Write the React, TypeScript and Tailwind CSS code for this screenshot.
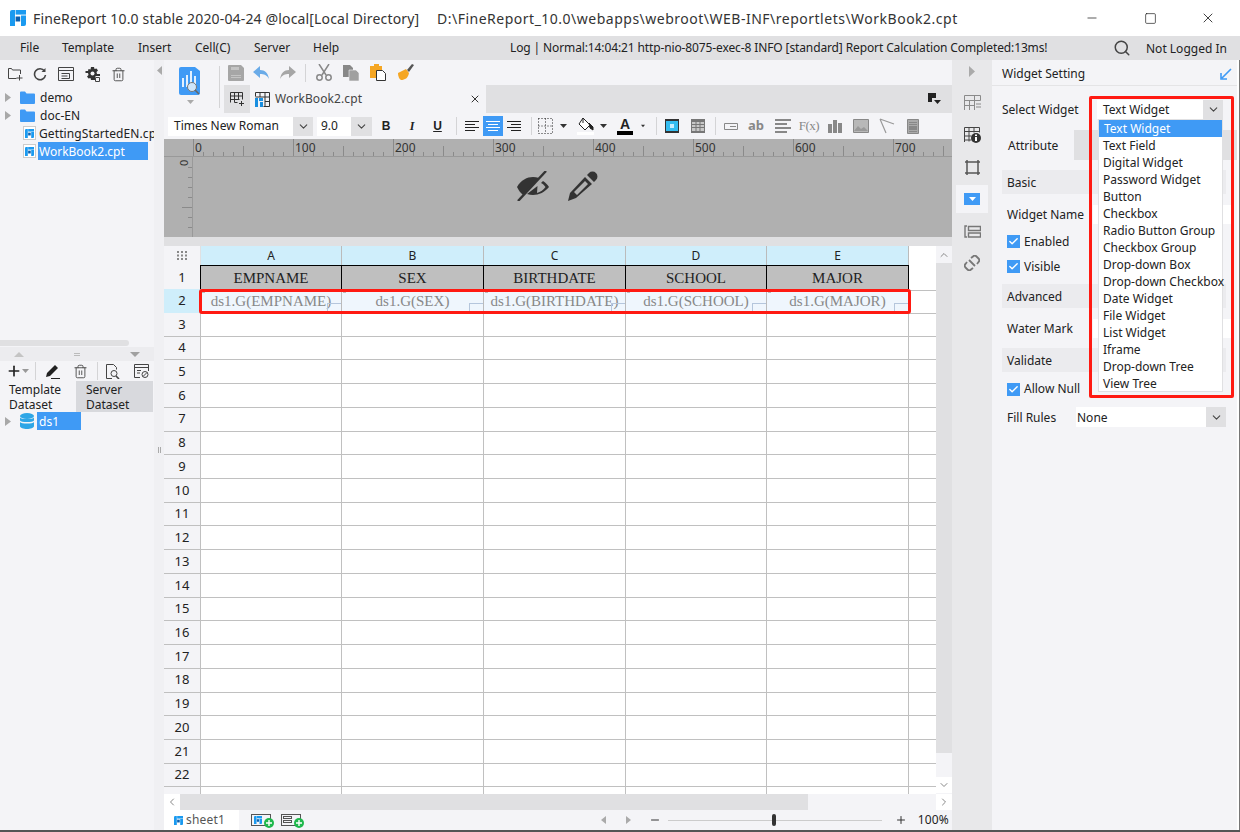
import { Check, ChevronDown, ChevronLeft, ChevronRight, ChevronUp, Minus, Plus, Search, Square, Trash2, X } from "lucide-react";
import { ReactNode } from "react";

const ui = "font-['Noto_Sans','Liberation_Sans',sans-serif]";
const columns = ["A", "B", "C", "D", "E"];
const headers = ["EMPNAME", "SEX", "BIRTHDATE", "SCHOOL", "MAJOR"];
const rows = Array.from({ length: 21 }, (_, i) => i + 3);
const widgets = ["Text Widget", "Text Field", "Digital Widget", "Password Widget", "Button", "Checkbox", "Radio Button Group", "Checkbox Group", "Drop-down Box", "Drop-down Checkbox", "Date Widget", "File Widget", "List Widget", "Iframe", "Drop-down Tree", "View Tree"];
const ticks = Array.from({ length: 8 }, (_, i) => i * 100);
const gridCols = "grid grid-cols-[37px_141px_142px_142px_141px_142px_27px]";

const Logo = ({ size = 16 }: { size?: number }) => (
  <svg width={size} height={size} viewBox="0 0 16 16">
    <path d="M0 2a2 2 0 0 1 2-2h3v16H0z" fill="#1a9af0" />
    <path d="M5.6 0H16v4.6H5.6z" fill="#1a9af0" />
    <path d="M5.6 6.5h4.6v5H5.6z" fill="#0b5fae" />
    <path d="M11 5.4h5V14a2 2 0 0 1-2 2h-3z" fill="#1a9af0" />
  </svg>
);

const FileIcon = () => (
  <div className="w-[13px] h-[14px] bg-white border border-[#ccc] flex items-center justify-center shrink-0">
    <Logo size={9} />
  </div>
);

const Caret = ({ color = "#333" }: { color?: string }) => (
  <svg width="7" height="4" viewBox="0 0 7 4"><path d="M0 0h7L3.5 4z" fill={color} /></svg>
);

const Tri = () => (
  <svg width="6" height="9" viewBox="0 0 6 9" className="shrink-0"><path d="M0 0l6 4.5L0 9z" fill="#a8a8a8" /></svg>
);

const Sep = ({ w, h = "h-[18px]" }: { w: string; h?: string }) => (
  <div className={`${w} flex justify-center shrink-0`}><div className={`w-px ${h} bg-[#d4d4d6]`} /></div>
);

const Slot = ({ w, children }: { w: string; children: ReactNode }) => (
  <div className={`${w} h-full flex items-center justify-center shrink-0`}>{children}</div>
);

const Checkbox = ({ label }: { label: string }) => (
  <div className="flex items-center gap-[4px]">
    <div className="w-[13px] h-[13px] bg-[#3f9af5] flex items-center justify-center">
      <Check size={11} color="#fff" strokeWidth={3} />
    </div>
    <span>{label}</span>
  </div>
);

const Section = ({ label }: { label: string }) => (
  <div className="h-[24px] bg-[#ebebee] flex items-center pl-[5px] pt-[1px] ml-[10px] mr-[11px]">{label}</div>
);

const Ruler = ({ start }: { start: number }) => (
  <div className="relative w-[100px] h-full shrink-0">
    <span className="ml-[2px] text-[12px] leading-[15px] text-[#333]">{start}</span>
    <svg width="100" height="17" viewBox="0 0 100 17" className="absolute left-0 top-0">
      <path d="M.5 0v17M50.5 7v10M10.5 13v4M20.5 13v4M30.5 13v4M40.5 13v4M60.5 13v4M70.5 13v4M80.5 13v4M90.5 13v4" stroke="#8a8a8a" fill="none" />
    </svg>
  </div>
);

const GreenPlus = () => (
  <svg width="10" height="10" viewBox="0 0 10 10" className="absolute -right-[4px] -bottom-[3px]">
    <circle cx="5" cy="5" r="5" fill="#1fb84c" />
    <path d="M5 2v6M2 5h6" stroke="#fff" strokeWidth="1.4" />
  </svg>
);

const TableAdd = () => (
  <svg width="16" height="16" viewBox="0 0 16 16" fill="none" stroke="#333">
    <path d="M1.5 11.5v-10h12v7M1.5 5h12M1.5 8.5h9M5.5 1.5v10h3M9.5 1.5v7M12.5 10v5M10 12.5h5" />
  </svg>
);

const App = () => {
  return (
    <div className={`${ui} relative w-[1240px] h-[832px] flex flex-col overflow-hidden bg-white text-[12px] text-[#222] border-b-2 border-[#555]`}>
      {/* title bar */}
      <div className="h-[36px] flex items-center shrink-0 text-[14px] text-[#333]">
        <div className="w-[33px] pl-[10px]"><Logo /></div>
        <span className="w-[404px] tracking-[0.16px]">FineReport 10.0 stable 2020-04-24 @local[Local Directory]</span>
        <span className="tracking-[0.5px]">D:\FineReport_10.0\webapps\webroot\WEB-INF\reportlets\WorkBook2.cpt</span>
        <div className="ml-auto flex items-center pr-[3px]">
          <Slot w="w-[58px]"><Minus size={14} strokeWidth={1.2} color="#111" /></Slot>
          <Slot w="w-[58px]"><Square size={13} strokeWidth={1.2} color="#111" /></Slot>
          <Slot w="w-[58px]"><X size={16} strokeWidth={1.2} color="#111" /></Slot>
        </div>
      </div>

      {/* menu bar */}
      <div className="h-[24px] bg-[#e0e0e2] flex items-center shrink-0">
        <div className="flex pl-[20px] w-[354px]">
          <span className="w-[42px]">File</span>
          <span className="w-[76px]">Template</span>
          <span className="w-[57px]">Insert</span>
          <span className="w-[59px]">Cell(C)</span>
          <span className="w-[59px]">Server</span>
          <span>Help</span>
        </div>
        <span className="ml-[156px] tracking-[-0.12px]">Log | Normal:14:04:21 http-nio-8075-exec-8 INFO [standard] Report Calculation Completed:13ms!</span>
        <Search size={18} color="#444" className="absolute left-[1113px] top-[39px]" />
        <span className="absolute left-[1146px] top-[40px]">Not Logged In</span>
      </div>

      <div className="flex flex-1 min-h-0 bg-[#f4f4f7]">
        {/* left panel */}
        <div className="w-[154px] flex flex-col shrink-0">
          <div className="h-[28px] flex items-center pl-[2px]">
            <Slot w="w-[25px]">
              <svg width="16" height="14" viewBox="0 0 16 14" fill="none" stroke="#444"><path d="M1.5 11.5v-10h3l1 1.5h8v4M1.5 11.5h8M12.5 8v5.5M9.5 11h6" /></svg>
            </Slot>
            <Slot w="w-[26px]">
              <svg width="14" height="14" viewBox="0 0 14 14" fill="none" stroke="#444" strokeWidth="1.6"><path d="M11.5 4A5.5 5.5 0 1 0 12.5 8" /><path d="M12.5 1v4h-4" fill="#444" stroke="none" /></svg>
            </Slot>
            <Slot w="w-[26px]">
              <svg width="16" height="14" viewBox="0 0 16 14" fill="none" stroke="#444"><path d="M.5.5h15v13H.5zM.5 3.5h15M3.5 6.5h8v5h-8M3.5 9h6" /></svg>
            </Slot>
            <Slot w="w-[27px]">
              <svg width="15" height="15" viewBox="0 0 15 15"><path d="M6 0h3l.5 2 2-.5 1.500 2-1.500 1.500.5 2H15v2l-4 0-1 1v3H6l-.5-2-2 .5-1.500-2 1.500-1.500-.5-2-2.500 0v-2l2.500 0 .5-2 2 .5z" fill="#333" /><circle cx="7.500" cy="6.500" r="2" fill="#f4f4f7" /><path d="M10.500 10.500h4v4h-4z" fill="#f4f4f7" stroke="#444" /></svg>
            </Slot>
            <Slot w="w-[25px]"><Trash2 size={15} color="#444" strokeWidth={1.4} /></Slot>
          </div>
          <div className="flex flex-col">
            {["demo", "doc-EN"].map((name) => (
              <div key={name} className="h-[18px] flex items-center pl-[5px]">
                <Tri />
                <svg width="15" height="13" viewBox="0 0 15 13" className="ml-[9px] mr-[5px]"><path d="M0 1.500a1 1 0 0 1 1-1h4l1.500 2H14a1 1 0 0 1 1 1V12a1 1 0 0 1-1 1H1a1 1 0 0 1-1-1z" fill="#3f9af5" /></svg>
                <span className="pt-[1px]">{name}</span>
              </div>
            ))}
            <div className="h-[18px] flex items-center pl-[23px] overflow-hidden whitespace-nowrap">
              <FileIcon /><span className="ml-[3px] pt-[1px] tracking-[0.1px]">GettingStartedEN.cpt</span>
            </div>
            <div className="h-[18px] flex items-center pl-[23px]">
              <FileIcon />
              <span className="ml-[2px] w-[110px] h-full bg-[#3f9af5] text-white pl-[1px] pt-[1px]">WorkBook2.cpt</span>
            </div>
          </div>
          <div className="flex-1 flex flex-col justify-end">
            <div className="h-[6px] w-[129px] rounded-r bg-[#e0e0e2] mb-[1px]" />
          </div>
          <div className="h-[14px] bg-[#ececef] flex items-center justify-between px-[14px]">
            <svg width="10" height="5" viewBox="0 0 10 5"><path d="M0 5l5-5 5 5z" fill="#c4c4c4" /></svg>
            <div className="w-[6px] h-[3px] border-y border-[#bbb]" />
            <svg width="10" height="5" viewBox="0 0 10 5"><path d="M0 0l5 5 5-5z" fill="#a0a0a0" /></svg>
          </div>
          <div className="h-[20px] flex items-center pl-[6px]">
            <Plus size={16} color="#222" strokeWidth={2.5} />
            <Caret color="#999" />
            <Sep w="w-[12px]" />
            <Slot w="w-[22px]">
              <svg width="15" height="15" viewBox="0 0 15 15"><path d="M10 1l3 3-8 8-4 1 1-4z" fill="#222" /><path d="M6 14h9v1H6z" fill="#222" /></svg>
            </Slot>
            <Slot w="w-[34px]"><Trash2 size={15} color="#444" strokeWidth={1.4} /></Slot>
            <Sep w="w-[1px]" />
            <Slot w="w-[30px]">
              <svg width="14" height="15" viewBox="0 0 14 15" fill="none" stroke="#444"><path d="M6 14.500H.5V.5h7l3 3v2" /><circle cx="8" cy="9.500" r="3" /><path d="M10 12l3 3" strokeWidth="1.6" /></svg>
            </Slot>
            <Slot w="w-[26px]">
              <svg width="15" height="14" viewBox="0 0 15 14" fill="none" stroke="#444"><path d="M6 13.500H.5V.5h14V7M.5 3.500h14M3 6.500h4M3 9h3" /><circle cx="11" cy="10.500" r="3" /><path d="M9 12.500l4-4" /></svg>
            </Slot>
          </div>
          <div className="h-[31px] flex leading-[15px] pt-[1px]">
            <div className="w-[76px] pl-[9px]">Template Dataset</div>
            <div className="w-[77px] pl-[10px] bg-[#d8d9dd] -mt-[1px] pt-[1px]">Server Dataset</div>
          </div>
          <div className="h-[18px] flex items-center pl-[5px] mb-[400px]">
            <Tri />
            <svg width="14" height="16" viewBox="0 0 14 16" className="ml-[9px] mr-[3px]">
              <ellipse cx="7" cy="3" rx="7" ry="3" fill="#2ea6e6" />
              <path d="M0 4.500c1 2 13 2 14 0v3c-1 2-13 2-14 0zM0 9c1 2 13 2 14 0v4c0 4-14 4-14 0z" fill="#2ea6e6" />
            </svg>
            <span className="w-[44px] h-full bg-[#3f9af5] text-white pl-[2px] pt-[1px]">ds1</span>
          </div>
        </div>

        {/* splitter */}
        <div className="w-[10px] flex flex-col items-center shrink-0 pt-[6px] bg-[#f0f0f3]">
          <svg width="5" height="9" viewBox="0 0 5 9"><path d="M5 0v9L0 4.500z" fill="#aaa" /></svg>
          <div className="w-[3px] h-[6px] border-x border-[#aaa] mt-[372px]" />
        </div>

        {/* centre */}
        <div className="w-[788px] flex flex-col shrink-0">
          <div className="h-[53px] flex shrink-0">
            <div className="w-[51px] flex flex-col items-center pt-[7px] pl-[1px]">
              <svg width="22" height="30" viewBox="0 0 22 30">
                <path d="M2 0h14l5 4v22a2 2 0 0 1-2 2H2a2 2 0 0 1-2-2V2a2 2 0 0 1 2-2z" fill="#3f9af5" />
                <path d="M3 11h2v9H3zM7 8h2v12H7zM11 4h2v14h-2zM15 9h2v8h-2z" fill="#fff" fillOpacity="0.85" />
                <circle cx="13" cy="20" r="4.500" fill="#cfe6fb" stroke="#777" />
                <path d="M16 23l4 4" stroke="#666" strokeWidth="1.6" />
              </svg>
              <div className="mt-[3px]"><Caret color="#aaa" /></div>
            </div>
            <Sep w="w-[9px]" h="h-[42px] mt-[6px]" />
            <div className="flex-1 flex flex-col min-w-0">
              <div className="h-[25px] flex items-center">
                <Slot w="w-[23px]">
                  <svg width="16" height="16" viewBox="0 0 16 16"><path d="M1 0h12l3 3v12a1 1 0 0 1-1 1H1a1 1 0 0 1-1-1V1a1 1 0 0 1 1-1z" fill="#a6a6a6" /><path d="M3 2h8v3H3zM3 10h10v1H3zM3 12h10v1H3z" fill="#c4c4c4" /></svg>
                </Slot>
                <svg width="18" height="15" viewBox="0 0 18 15" className="ml-[5px]"><path d="M8 1L1 7l7 6V9c4 0 7 1 9 5-1-6-4-9-9-9z" fill="#6aabe8" /></svg>
                <svg width="18" height="15" viewBox="0 0 18 15" className="ml-[9px]"><path d="M10 1l7 6-7 6V9C6 9 3 10 1 14c1-6 4-9 9-9z" fill="#a6a6a6" /></svg>
                <Sep w="w-[17px]" />
                <Slot w="w-[20px]">
                  <svg width="16" height="17" viewBox="0 0 16 17" fill="none" stroke="#888" strokeWidth="1.5"><path d="M3 0l7 11M13 0L6 11" /><circle cx="3.500" cy="13.500" r="2.700" /><circle cx="12.500" cy="13.500" r="2.700" /></svg>
                </Slot>
                <Slot w="w-[34px]">
                  <svg width="16" height="16" viewBox="0 0 16 16"><path d="M0 0h7l3 3v9H0z" fill="#888" /><path d="M6 5h7l3 3v8H6z" fill="#a0a0a0" stroke="#f4f4f7" strokeWidth=".6" /></svg>
                </Slot>
                <Slot w="w-[20px]">
                  <svg width="16" height="17" viewBox="0 0 16 17"><path d="M0 2h4V0h5v2h3v12H0z" fill="#f5a623" /><path d="M6.500 6.500h6l3 3v7h-9z" fill="#fff" stroke="#333" /></svg>
                </Slot>
                <Slot w="w-[34px]">
                  <svg width="17" height="17" viewBox="0 0 17 17"><path d="M10 6l5-6 2 1-5 7z" fill="#555" /><path d="M1 9l8-4 3 4c-1 5-4 7-8 7-2-1-3-4-3-7z" fill="#f5a623" /></svg>
                </Slot>
              </div>
              <div className="h-[28px] bg-[#e0e0e2] flex items-stretch">
                <Slot w="w-[26px]"><TableAdd /></Slot>
                <div className="w-[236px] bg-[#f4f4f7] flex items-center pl-[5px] relative">
                  <div className="relative w-[15px] h-[15px]">
                    <svg width="15" height="15" viewBox="0 0 15 15" fill="none" stroke="#333"><path d="M.5.5h14v14h-6M.5 5h14M.5.5v4M5 .5v4.500M10 .5v14M10 9.500h4.500" /><path d="M0 6h3v9H0zM4 6h4v3H4zM5 10h3v5H5z" fill="#1a8fe0" stroke="none" /></svg>
                  </div>
                  <span className="ml-[5px] text-[#444] tracking-[0.1px]">WorkBook2.cpt</span>
                  <X size={12} color="#333" className="absolute right-[5px] top-[8px]" />
                </div>
                <svg width="14" height="12" viewBox="0 0 14 12" className="ml-auto mr-[10px] self-center"><path d="M0 0h8v5H4v4H0z" fill="#222" /><path d="M6 7h7l-3.500 4z" fill="#222" /></svg>
              </div>
            </div>
          </div>

          <div className="h-[26px] flex items-center shrink-0 pl-[4px]">
            <div className="w-[145px] h-[19px] bg-white flex items-center pl-[6px] shrink-0">
              <span className="flex-1">Times New Roman</span>
              <div className="w-[20px] h-full bg-[#e0e0e2] flex items-center justify-center"><ChevronDown size={13} color="#444" /></div>
            </div>
            <div className="w-[55px] h-[19px] bg-white flex items-center pl-[4px] ml-[4px] shrink-0">
              <span className="flex-1">9.0</span>
              <div className="w-[21px] h-full bg-[#e0e0e2] flex items-center justify-center"><ChevronDown size={13} color="#444" /></div>
            </div>
            <Slot w="w-[28px]"><span className="font-bold text-[12px] font-['Liberation_Sans',sans-serif]">B</span></Slot>
            <Slot w="w-[24px]"><span className="italic font-bold text-[12px] font-['Liberation_Serif',serif]">I</span></Slot>
            <Slot w="w-[27px]"><span className="underline font-bold text-[12px] font-['Liberation_Sans',sans-serif]">U</span></Slot>
            <Sep w="w-[10px]" />
            {["items-start", "items-center", "items-end"].map((a, i) => (
              <Slot key={a} w={i === 1 ? "w-[20px]" : "w-[22px]"}>
                <div className={`w-[20px] h-[20px] flex flex-col justify-center gap-[2px] px-[3px] ${a} ${i === 1 ? "bg-[#3f9af5]" : ""}`}>
                  {[14, 10, 14, 10].map((l, k) => (
                    <div key={k} className={`h-px ${i === 1 ? "bg-white" : "bg-[#222]"} ${l === 14 ? "w-[14px]" : "w-[10px]"}`} />
                  ))}
                </div>
              </Slot>
            ))}
            <Sep w="w-[12px]" />
            <Slot w="w-[16px]">
              <svg width="15" height="16" viewBox="0 0 15 16" fill="none" stroke="#222" strokeDasharray="1 2"><path d="M.5.5h14v15H.5zM.5 8h14M7.500.5v15" /></svg>
            </Slot>
            <Slot w="w-[20px]"><Caret /></Slot>
            <Slot w="w-[24px]">
              <svg width="17" height="18" viewBox="0 0 17 18"><path d="M0 15h17v3H0z" fill="#fff" /><path d="M6 1l7 7-5 5-6-6z" fill="#fff" stroke="#222" /><path d="M6 1v5M12 6l4 4v3l-3-2z" fill="#222" stroke="#222" /></svg>
            </Slot>
            <Slot w="w-[12px]"><Caret /></Slot>
            <Slot w="w-[32px]">
              <div className="flex flex-col items-center leading-none">
                <span className="font-bold text-[14px] leading-[13px] font-['Liberation_Sans',sans-serif]">A</span>
                <div className="w-[16px] h-[4px] bg-black" />
              </div>
            </Slot>
            <Slot w="w-[4px]"><Caret /></Slot>
            <Sep w="w-[22px]" />
            <Slot w="w-[10px]">
              <svg width="14" height="14" viewBox="0 0 14 14" className="shrink-0"><path d="M0 0h14v14H0z" fill="#333" /><path d="M1 2h12v10H1z" fill="#35bdf0" /><path d="M5 5h4v4H5z" fill="#c9efff" /></svg>
            </Slot>
            <Slot w="w-[4px]"><div /></Slot>
            <Slot w="w-[34px]">
              <svg width="14" height="14" viewBox="0 0 14 14"><path d="M0 0h14v14H0z" fill="#777" /><path d="M1 3h3.500v2H1zM5.500 3h3v2h-3zM9.500 3H13v2H9.500zM1 6h3.500v2H1zM5.500 6h3v2h-3zM9.500 6H13v2H9.500zM1 9h3.500v3H1zM5.500 9h3v3h-3zM9.500 9H13v3H9.500z" fill="#c8c8c8" /></svg>
            </Slot>
            <Sep w="w-[1px]" />
            <Slot w="w-[30px]">
              <svg width="14" height="7" viewBox="0 0 14 7"><path d="M.5.5h13v6H.5z" fill="none" stroke="#888" /><path d="M6 3h6v1H6z" fill="#888" /></svg>
            </Slot>
            <Slot w="w-[20px]"><span className="font-bold text-[13px] text-[#888]">ab</span></Slot>
            <Slot w="w-[34px]">
              <div className="flex flex-col gap-[2px]">
                <div className="w-[16px] h-[2px] bg-[#888]" /><div className="w-[12px] h-[2px] bg-[#888]" /><div className="w-[16px] h-[2px] bg-[#888]" /><div className="w-[12px] h-[2px] bg-[#888]" />
              </div>
            </Slot>
            <Slot w="w-[18px]"><span className="text-[#888] font-['Liberation_Serif',serif] text-[13px] whitespace-nowrap tracking-[-0.5px]">F(x)</span></Slot>
            <Slot w="w-[34px]">
              <div className="flex items-end gap-[1px]">
                <div className="w-[4px] h-[9px] bg-[#888]" /><div className="w-[4px] h-[13px] bg-[#888]" /><div className="w-[4px] h-[10px] bg-[#888]" />
              </div>
            </Slot>
            <Slot w="w-[18px]">
              <svg width="16" height="14" viewBox="0 0 16 14"><path d="M.5.5h15v13H.5z" fill="#b8b8b8" stroke="#888" /><path d="M1 12l4-5 3 3 3-2 4 4z" fill="#999" /></svg>
            </Slot>
            <Slot w="w-[34px]"><svg width="16" height="16" viewBox="0 0 16 16"><path d="M1 1l14 5M1 1l6 14" stroke="#999" strokeWidth="1.2" fill="none" /></svg></Slot>
            <Slot w="w-[18px]">
              <svg width="12" height="15" viewBox="0 0 12 15"><path d="M.5.5h11v14H.5z" fill="#aaa" stroke="#888" /><path d="M2 3h8v1H2zM2 5h8v1H2zM2 7h8v4H2zM2 12h8v1H2z" fill="#888" /></svg>
            </Slot>
          </div>

          {/* design area */}
          <div className="h-[98px] bg-[#b0b0b0] flex flex-col shrink-0">
            <div className="h-[18px] pl-[29px] flex border-b border-[#999] overflow-hidden">
              {ticks.map((t) => <Ruler key={t} start={t} />)}
            </div>
            <div className="flex-1 flex">
              <div className="w-[12px]" />
              <div className="w-[17px] border-r border-[#999] relative flex justify-center">
                <span className="rotate-90 text-[11px] leading-[12px] h-[12px] text-[#333]">0</span>
                <svg width="17" height="80" viewBox="0 0 17 80" className="absolute left-0 top-0">
                  <path d="M12 10.500h4M12 20.500h4M12 30.500h4M6 50.500h10M12 40.500h4M12 60.500h4M12 70.500h4" stroke="#8a8a8a" />
                </svg>
              </div>
              <div className="flex-1 flex justify-center pt-[14px] pr-[30px]">
                <div className="flex items-start gap-[19px]">
                  <svg width="32" height="30" viewBox="0 0 32 30">
                    <path d="M0 16C4 9 10 6 16 6c2 0 4 .4 6 1L6 24C3.500 22 1.500 19 0 16z" fill="#333" />
                    <path d="M10 23c2 .6 4 1 6 1 6 0 12-3 16-8-1.500-2.500-3.500-4.500-6-6l-2 2c2 1 3.500 2.500 4.500 4-2 3-5 5-8.500 6l.5-7z" fill="#333" />
                    <path d="M29 0L1 30" stroke="#333" strokeWidth="2.400" />
                  </svg>
                  <svg width="30" height="30" viewBox="0 0 30 30">
                    <path d="M21 2a4 4 0 0 1 7 7l-2 2-7-7z" fill="#333" />
                    <path fillRule="evenodd" d="M17 6l7 7L8 27l-8 3 2-8zM17 10L6 21l3 3 11-11z" fill="#333" />
                  </svg>
                </div>
              </div>
            </div>
          </div>
          <div className="h-[9px] bg-[#e0e0e2] shrink-0" />

          {/* spreadsheet */}
          <div className="flex h-[548px] shrink-0">
            <div className="w-[772px] overflow-hidden bg-white">
              <div className={`${gridCols} h-[19px]`}>
                <div className="bg-[#f4f4f7] flex items-center justify-center border-r border-[#e0e0e2]">
                  <svg width="11" height="9" viewBox="0 0 11 9" fill="#888"><path d="M0 0h2v2H0zM4 0h2v2H4zM8 0h2v2H8zM0 3.500h2v2H0zM4 3.500h2v2H4zM8 3.500h2v2H8zM0 7h2v2H0zM4 7h2v2H4zM8 7h2v2H8z" /></svg>
                </div>
                {columns.map((c) => (
                  <div key={c} className="bg-[#cfeefb] border-r border-[#bbb] flex items-center justify-center text-[#222]">{c}</div>
                ))}
                <div className="bg-white" />
              </div>
              <div className={`${gridCols} h-[24px]`}>
                <div className="bg-[#f4f4f7] flex items-center justify-center border-b border-r border-[#ccc] border-r-black text-[13px]">1</div>
                {headers.map((h) => (
                  <div key={h} className="bg-[#bfbfbf] border-t border-r border-b border-black flex items-center justify-center pt-[1px] text-[15px] font-['Liberation_Serif',serif]">{h}</div>
                ))}
                <div className="border-b border-[#c0c0c0]" />
              </div>
              <div className={`${gridCols} h-[24px]`}>
                <div className="bg-[#cfeefb] flex items-center justify-center border-b border-r border-[#c0c0c0] text-[13px]">2</div>
                {headers.map((h) => (
                  <div key={h} className="relative bg-[#eff6fd] border-r border-b border-[#bbb] flex items-center justify-center pt-[1px] text-[15px] text-[#888] font-['Liberation_Serif',serif]">
                    ds1.G({h})
                    <div className="absolute right-0 bottom-0 w-[14px] h-[10px] border-l border-t border-[#b5c6dc]" />
                    <div className="absolute left-[1px] top-[1px] w-[3px] h-[3px] bg-[#bbb]" />
                  </div>
                ))}
                <div className="border-b border-[#c0c0c0]" />
              </div>
              {rows.map((r) => (
                <div key={r} className={`${gridCols} h-[23.72px]`}>
                  <div className="bg-[#f4f4f7] flex items-center justify-center border-b border-r border-[#c0c0c0] text-[13px]">{r < 23 ? r : ""}</div>
                  {columns.map((c) => <div key={c} className="border-r border-b border-[#c0c0c0]" />)}
                  <div className="border-b border-[#c0c0c0]" />
                </div>
              ))}
            </div>
            <div className="w-[16px] flex flex-col items-center">
              <div className="h-[17px] flex items-center"><ChevronUp size={12} color="#888" /></div>
              <div className="w-full h-[490px] bg-[#e0e0e2]" />
              <div className="mt-auto h-[16px] mb-[1px] w-full bg-white flex items-center justify-center"><ChevronDown size={12} color="#888" /></div>
            </div>
          </div>

          <div className="h-[16px] flex shrink-0">
            <div className="w-[16px] bg-white flex items-center justify-center"><ChevronLeft size={12} color="#888" /></div>
            <div className="w-[628px] bg-[#e0e0e2]" />
            <div className="ml-auto w-[16px] bg-white flex items-center justify-center"><ChevronRight size={12} color="#888" /></div>
          </div>

          <div className="flex-1 flex items-center">
            <div className="w-[75px] h-full bg-white flex items-center pl-[10px] gap-[3px] text-[#555] tracking-[0.2px]"><Logo size={9} /><span>sheet1</span></div>
            <div className="ml-[12px] w-[20px] h-[12px] border border-[#555] relative flex items-center pl-[2px]">
              <Logo size={8} />
              <GreenPlus />
            </div>
            <div className="ml-[10px] w-[20px] h-[12px] border border-[#555] relative flex flex-col gap-px p-px">
              <div className="w-[9px] h-[3px] border border-[#555]" />
              <div className="w-[9px] h-[3px] border border-[#555]" />
              <GreenPlus />
            </div>
            <div className="ml-auto flex items-center">
              <svg width="5" height="8" viewBox="0 0 5 8"><path d="M5 0v8L0 4z" fill="#aaa" /></svg>
              <svg width="5" height="8" viewBox="0 0 5 8" className="ml-[20px]"><path d="M0 0v8l5-4z" fill="#aaa" /></svg>
              <Minus size={12} color="#333" className="ml-[18px]" />
              <div className="ml-[7px] w-[214px] h-px bg-[#ccc] relative">
                <div className="absolute left-[104px] -top-[6px] w-[4px] h-[12px] rounded-sm bg-[#333]" />
              </div>
              <Plus size={12} color="#333" className="ml-[13px]" />
              <span className="ml-[11px] mr-[3px] tracking-[0.2px]">100%</span>
            </div>
          </div>
        </div>

        {/* icon strip */}
        <div className="w-[40px] bg-[#e8e8ea] flex flex-col items-center shrink-0 pt-[6px]">
          <svg width="6" height="11" viewBox="0 0 6 11"><path d="M0 0l6 5.500L0 11z" fill="#aaa" /></svg>
          <div className="mt-[10px] h-[32px] flex items-center">
            <svg width="17" height="16" viewBox="0 0 17 16" fill="none" stroke="#8a8a8a"><path d="M.5 15V.5h16M.5 5.500h16M.5 10.500H11M5.500 5.500V15M10.500.5V15M16.500.5v5M12 9h5M12 12h5" /></svg>
          </div>
          <div className="h-[32px] flex items-center">
            <svg width="17" height="16" viewBox="0 0 17 16"><path d="M.5 15V.5h15v5M.5 4.500h15M.5 9h7M.5 13h7M5 .5v14M10 .5v5" fill="none" stroke="#444" /><circle cx="12" cy="11" r="5" fill="#333" /><path d="M11 10h2v4h-2zM11 7.500h2v1.500h-2z" fill="#fff" /></svg>
          </div>
          <div className="h-[32px] flex items-center">
            <svg width="17" height="17" viewBox="0 0 17 17" fill="none" stroke="#555" strokeWidth="1.5"><path d="M3 1v15M14 1v15M1 3h15M1 14h15" /></svg>
          </div>
          <div className="w-[32px] h-[28px] mt-[2px] bg-[#f4f4f7] flex items-center justify-center">
            <div className="w-[16px] h-[12px] bg-[#3f9af5] flex items-center justify-center"><Caret color="#fff" /></div>
          </div>
          <div className="h-[36px] flex items-center">
            <svg width="17" height="13" viewBox="0 0 17 13" fill="none" stroke="#777" strokeWidth="1.4"><path d="M3 1H1v11h2M4.500 1.500h12v4h-12zM4.500 8h12v4h-12z" /></svg>
          </div>
          <div className="h-[28px] flex items-center">
            <svg width="16" height="16" viewBox="0 0 16 16" fill="none" stroke="#777" strokeWidth="1.8"><path d="M7 3l2-1.500a2.500 2.500 0 0 1 3.500 0l2 2a2.500 2.500 0 0 1 0 3.500L13 9M9 13l-2 1.500a2.500 2.500 0 0 1-3.500 0l-2-2a2.500 2.500 0 0 1 0-3.500L3 7M5 5l6 6" /></svg>
          </div>
        </div>

        {/* widget panel */}
        <div className="w-[245px] shrink-0 flex flex-col">
          <div className="h-[26px] flex items-center pl-[10px] pt-[2px] border-b border-[#e4e4e6]">
            <span>Widget Setting</span>
            <svg width="12" height="12" viewBox="0 0 12 12" className="ml-auto mr-[5px]"><path d="M11 1L2 10M1 5v6h6" stroke="#3f9af5" strokeWidth="1.600" fill="none" /></svg>
          </div>
          <div className="h-[44px] flex items-start pl-[10px] pt-[14px]">
            <span className="w-[95px] pt-[1px]">Select Widget</span>
            <div className="w-[126px] h-[19px] bg-white flex items-center pl-[6px]">
              <span className="flex-1">Text Widget</span>
              <div className="w-[20px] h-full bg-[#e0e0e2] flex items-center justify-center"><ChevronDown size={13} color="#444" /></div>
            </div>
          </div>
          <div className="h-[30px] flex bg-[#e0e0e2]">
            <div className="w-[82px] bg-[#f4f4f7] flex items-center pl-[16px] pt-[1px]">Attribute</div>
          </div>
          <div className="h-[10px]" />
          <Section label="Basic" />
          <div className="h-[30px] mt-[5px] flex items-center pl-[15px] gap-[2px]">
            <span className="w-[84px] pt-[1px]">Widget Name</span>
            <div className="w-[138px] h-[19px] bg-white" />
          </div>
          <div className="h-[25px] flex items-center pl-[15px]"><Checkbox label="Enabled" /></div>
          <div className="h-[25px] flex items-center pl-[15px]"><Checkbox label="Visible" /></div>
          <div className="h-[5px]" />
          <Section label="Advanced" />
          <div className="h-[40px] flex items-center pl-[15px] gap-[2px]">
            <span className="w-[84px] pt-[1px]">Water Mark</span>
            <div className="w-[138px] h-[19px] bg-white" />
          </div>
          <Section label="Validate" />
          <div className="h-[34px] flex items-center pl-[15px]"><Checkbox label="Allow Null" /></div>
          <div className="flex items-center pl-[15px] h-[22px]">
            <span className="w-[69px] pt-[1px]">Fill Rules</span>
            <div className="w-[150px] h-[20px] bg-white flex items-center pl-[1px]">
              <span className="flex-1 pt-[1px]">None</span>
              <div className="w-[20px] h-full bg-[#e0e0e2] flex items-center justify-center"><ChevronDown size={13} color="#444" /></div>
            </div>
          </div>
        </div>
        <div className="w-[3px] bg-white border-r border-[#777] shrink-0" />
      </div>

      {/* dropdown popup */}
      <div className="absolute left-[1098px] top-[119px] w-[125px] h-[273px] bg-white border border-[#e0e0e2] flex flex-col">
        {widgets.map((w, i) => (
          <div key={w} className={`h-[17px] leading-[17px] pl-[4px] whitespace-nowrap ${i === 0 ? "bg-[#3f9af5] text-white pl-[5px]" : ""}`}>{w}</div>
        ))}
      </div>

      {/* red annotations */}
      <div className="absolute left-[1089px] top-[96px] w-[145px] h-[302px] border-[3px] border-[#ff1a12] rounded-[2px]" />
      <div className="absolute left-[199px] top-[289px] w-[712px] h-[25px] border-[3px] border-[#ff1a12] rounded-[3px]" />
    </div>
  );
};

export default App;
